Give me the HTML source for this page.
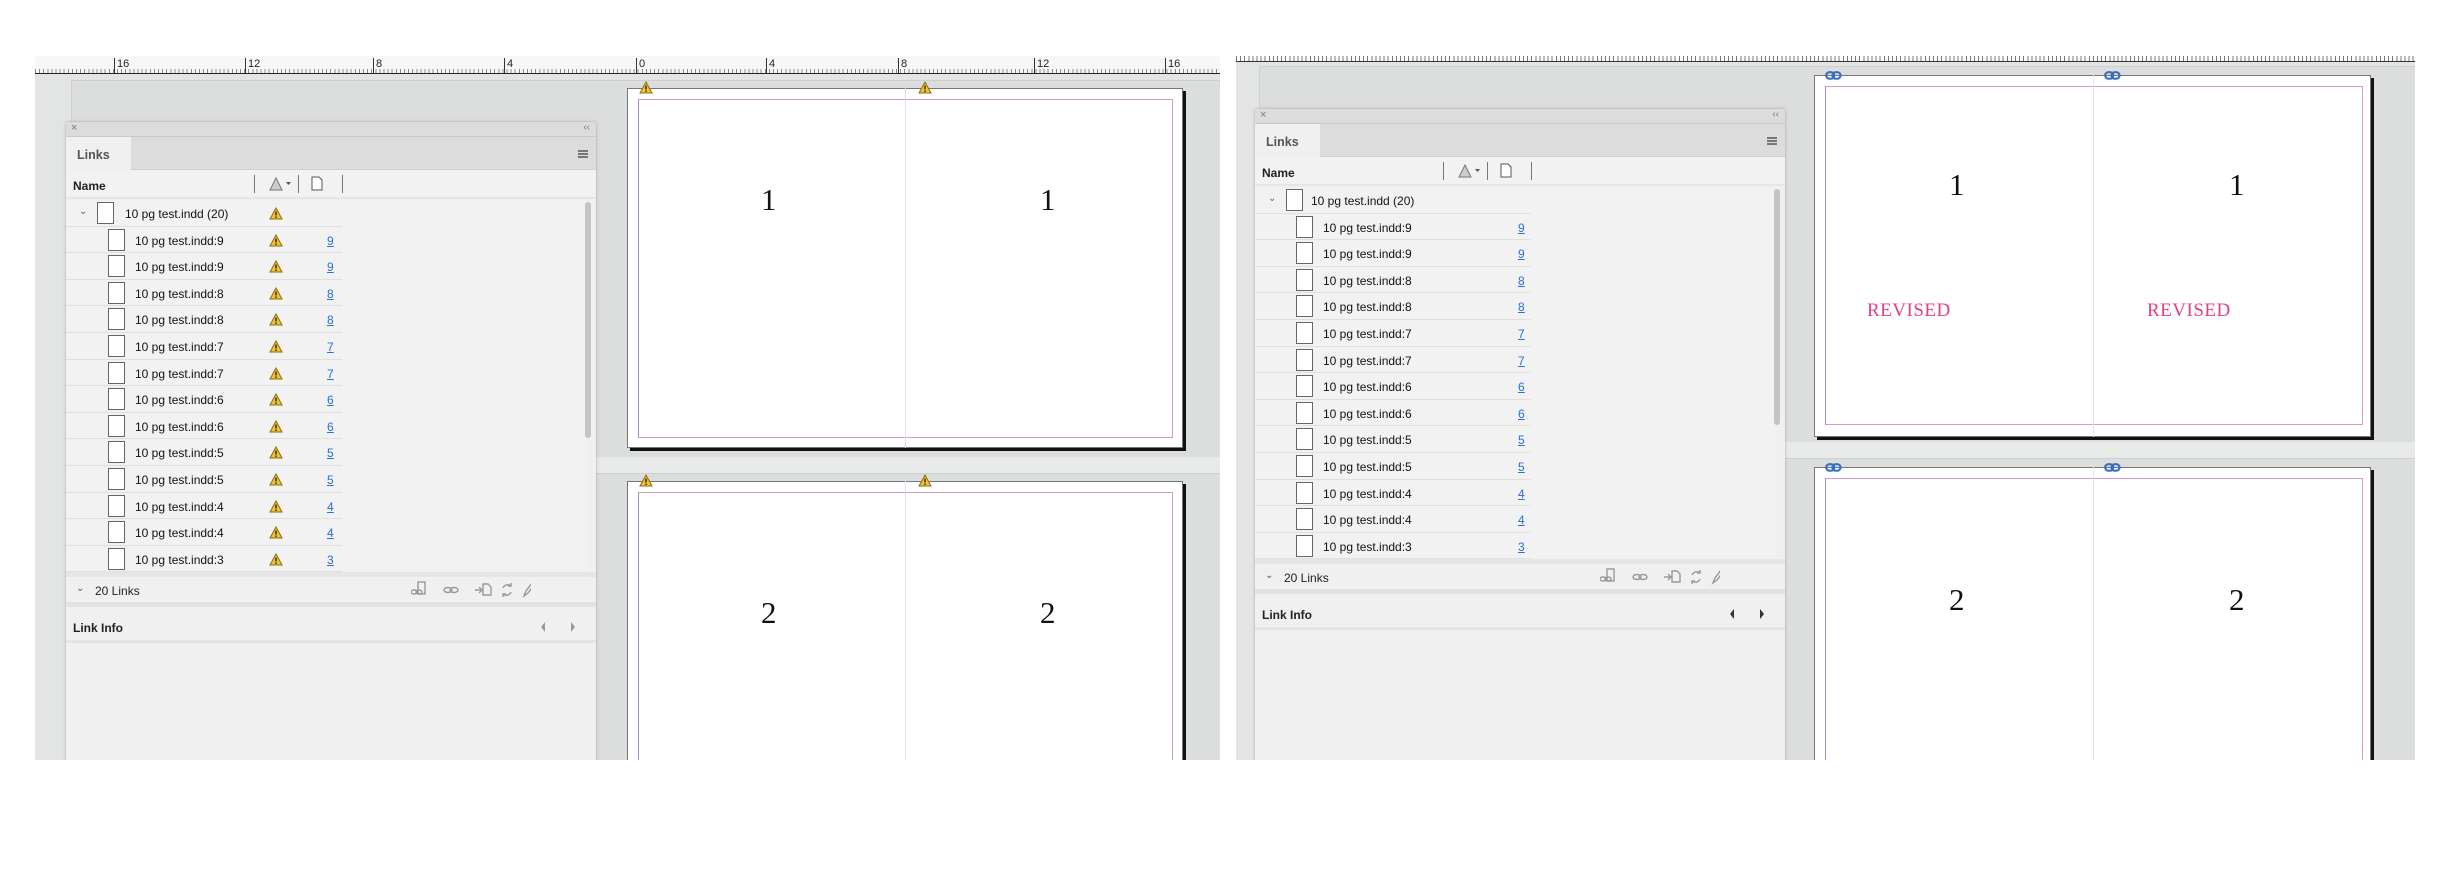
<!DOCTYPE html>
<html><head><meta charset="utf-8">
<style>
*{margin:0;padding:0;box-sizing:border-box}
body{width:2450px;height:878px;background:#fff;position:relative;overflow:hidden;font-family:"Liberation Sans",sans-serif;font-size:12px;color:#222}
.a{position:absolute}
.scr{position:absolute;background:#e3e4e4;overflow:hidden}
.ruler{position:absolute;background:#f7f7f7;border-bottom:1px solid #222;
background-image:repeating-linear-gradient(90deg,#888 0 1px,transparent 1px 4.1px);background-size:100% 4px;background-repeat:repeat-x;background-position:0 100%}
.rn{position:absolute;top:2px;font-size:11px;color:#222;border-left:1px solid #333;padding-left:2px;height:15px}
.pb{position:absolute;background:#dcdddd;border-top:1px solid #cfcfcf;border-left:1px solid #cfcfcf}
.page{position:absolute;background:#fff;border:1px solid #777;box-shadow:3px 3px 0 #111}
.marg{position:absolute;border:1px solid #d79ac4;border-left-color:#a58ad0}
.fold{position:absolute;width:1px;background:#dde3ea}
.num{position:absolute;font-family:"Liberation Serif",serif;font-size:31px;color:#111}
.rev{position:absolute;font-family:"Liberation Serif",serif;font-size:19px;color:#e0408c;letter-spacing:.5px}
.panel{position:absolute;background:#f0f0f0;box-shadow:0 0 3px rgba(0,0,0,.25);overflow:hidden}
.hdr{position:absolute;left:0;right:0;top:0;height:15px;background:#dcdcdc;border-bottom:1px solid #cacaca}
.tabrow{position:absolute;left:0;right:0;top:15px;height:33px;background:#dcdcdc;border-bottom:1px solid #cfcfcf}
.tab{position:absolute;left:0;top:0;width:65px;height:34px;background:#f0f0f0;font-weight:bold;color:#555;font-size:12.5px;padding:11px 0 0 11px}
.ch{position:absolute;left:0;right:0;top:48px;height:29px;border-bottom:2px solid #e6e6e6;background:#f2f2f2}
.row{position:absolute;left:0;width:276px;height:26.6px;border-bottom:1px solid #e0e0e0;background:#f2f2f2}
.doc{position:absolute;width:17px;height:22px;background:#fff;border:1px solid #666;top:2px}
.t{position:absolute;top:7px;font-size:12px;white-space:nowrap;color:#111}
.pg{position:absolute;top:7px;color:#2a6fd6;text-decoration:underline;font-size:12px}
.sb{position:absolute;width:6px;border-radius:3px;background:#c4c4c4}
.bar{position:absolute;left:0;right:0;height:35px;border-top:5px solid #e6e6e6;border-bottom:5px solid #e2e2e2}
.li{position:absolute;left:0;right:0;height:31px;border-bottom:3px solid #e4e4e4}
</style></head><body>

<!-- LEFT SCREEN -->
<div class="scr" style="left:35px;top:56px;width:1185px;height:704px">
  <div class="ruler" style="left:0;top:0;width:1185px;height:18px"></div>
  <div class="rn" style="left:79px">16</div><div class="rn" style="left:210px">12</div><div class="rn" style="left:338px">8</div><div class="rn" style="left:469px">4</div><div class="rn" style="left:601px">0</div><div class="rn" style="left:731px">4</div><div class="rn" style="left:863px">8</div><div class="rn" style="left:999px">12</div><div class="rn" style="left:1130px">16</div>
  <div class="pb" style="left:36px;top:24px;width:1160px;height:377px"></div>
  <div class="a" style="left:560px;top:401px;width:640px;height:16px;background:#e8e9e9"></div>
  <div class="pb" style="left:560px;top:417px;width:640px;height:300px"></div>
  <div class="page" style="left:592px;top:32px;width:556px;height:360px"></div>
  <div class="marg" style="left:603px;top:43px;width:535px;height:339px"></div>
  <div class="fold" style="left:870px;top:32px;height:360px"></div>
  <div class="num" style="left:726px;top:126px">1</div><div class="num" style="left:1005px;top:126px">1</div>
  <div class="page" style="left:592px;top:425px;width:556px;height:300px"></div>
  <div class="marg" style="left:603px;top:436px;width:535px;height:300px"></div>
  <div class="fold" style="left:870px;top:425px;height:300px"></div>
  <div class="num" style="left:726px;top:539px">2</div><div class="num" style="left:1005px;top:539px">2</div>
  <svg class="a" style="left:604px;top:25px" width="14" height="13"><path d="M7 1L13 12H1Z" fill="#f2c232" stroke="#8a6d10"/><rect x="6.3" y="4.5" width="1.4" height="4" fill="#222"/><rect x="6.3" y="9.5" width="1.4" height="1.4" fill="#222"/></svg>
  <svg class="a" style="left:883px;top:25px" width="14" height="13"><path d="M7 1L13 12H1Z" fill="#f2c232" stroke="#8a6d10"/><rect x="6.3" y="4.5" width="1.4" height="4" fill="#222"/><rect x="6.3" y="9.5" width="1.4" height="1.4" fill="#222"/></svg>
  <svg class="a" style="left:604px;top:418px" width="14" height="13"><path d="M7 1L13 12H1Z" fill="#f2c232" stroke="#8a6d10"/><rect x="6.3" y="4.5" width="1.4" height="4" fill="#222"/><rect x="6.3" y="9.5" width="1.4" height="1.4" fill="#222"/></svg>
  <svg class="a" style="left:883px;top:418px" width="14" height="13"><path d="M7 1L13 12H1Z" fill="#f2c232" stroke="#8a6d10"/><rect x="6.3" y="4.5" width="1.4" height="4" fill="#222"/><rect x="6.3" y="9.5" width="1.4" height="1.4" fill="#222"/></svg>
</div>

<!-- LEFT PANEL -->
<div class="panel" style="left:66px;top:122px;width:530px;height:640px">
  <div class="hdr"><span class="a" style="left:5px;top:0;font-size:11px;color:#777">×</span><span class="a" style="right:6px;top:0;font-size:10px;color:#777">‹‹</span></div>
  <div class="tabrow"><div class="tab">Links</div><div class="a" style="right:8px;top:13px;width:10px;height:8px;border-top:2px solid #777;border-bottom:2px solid #777"><div style="margin-top:1px;border-top:2px solid #777"></div></div></div>
  <div class="ch"><b class="a" style="left:7px;top:9px">Name</b>
    <div class="a" style="left:188px;top:5px;width:1px;height:18px;background:#777"></div>
    <svg class="a" style="left:203px;top:7px" width="24" height="14"><path d="M7 1L13 13H1Z" fill="#ccc" stroke="#777"/><path d="M17 5h5l-2.5 3z" fill="#555"/></svg>
    <div class="a" style="left:232px;top:5px;width:1px;height:18px;background:#777"></div>
    <svg class="a" style="left:245px;top:6px" width="12" height="15"><path d="M1 1h7l3 3v10H1z" fill="#fff" stroke="#555"/></svg>
    <div class="a" style="left:276px;top:5px;width:1px;height:18px;background:#777"></div>
  </div>
  <div class="a" style="left:0;top:78px;width:520px;height:372px;background:#f2f2f2"></div>
  <div class="sb" style="left:519px;top:80px;height:236px"></div>

  <div class="row" style="top:78px"><span class="a" style="left:13px;top:6px;font-size:10px;color:#666">⌄</span><div class="doc" style="left:31px"></div><span class="t" style="left:59px">10 pg test.indd (20)</span><svg class="a" style="left:203px;top:7px" width="14" height="13"><path d="M7 1L13 12H1Z" fill="#f2c232" stroke="#8a6d10"/><rect x="6.3" y="4.5" width="1.4" height="4" fill="#222"/><rect x="6.3" y="9.5" width="1.4" height="1.4" fill="#222"/></svg></div>
  <div class="row" style="top:104.6px"><div class="doc" style="left:42px"></div><span class="t" style="left:69px">10 pg test.indd:9</span><svg class="a" style="left:203px;top:7px" width="14" height="13"><path d="M7 1L13 12H1Z" fill="#f2c232" stroke="#8a6d10"/><rect x="6.3" y="4.5" width="1.4" height="4" fill="#222"/><rect x="6.3" y="9.5" width="1.4" height="1.4" fill="#222"/></svg><span class="pg" style="left:261px">9</span></div>
  <div class="row" style="top:131.2px"><div class="doc" style="left:42px"></div><span class="t" style="left:69px">10 pg test.indd:9</span><svg class="a" style="left:203px;top:7px" width="14" height="13"><path d="M7 1L13 12H1Z" fill="#f2c232" stroke="#8a6d10"/><rect x="6.3" y="4.5" width="1.4" height="4" fill="#222"/><rect x="6.3" y="9.5" width="1.4" height="1.4" fill="#222"/></svg><span class="pg" style="left:261px">9</span></div>
  <div class="row" style="top:157.8px"><div class="doc" style="left:42px"></div><span class="t" style="left:69px">10 pg test.indd:8</span><svg class="a" style="left:203px;top:7px" width="14" height="13"><path d="M7 1L13 12H1Z" fill="#f2c232" stroke="#8a6d10"/><rect x="6.3" y="4.5" width="1.4" height="4" fill="#222"/><rect x="6.3" y="9.5" width="1.4" height="1.4" fill="#222"/></svg><span class="pg" style="left:261px">8</span></div>
  <div class="row" style="top:184.4px"><div class="doc" style="left:42px"></div><span class="t" style="left:69px">10 pg test.indd:8</span><svg class="a" style="left:203px;top:7px" width="14" height="13"><path d="M7 1L13 12H1Z" fill="#f2c232" stroke="#8a6d10"/><rect x="6.3" y="4.5" width="1.4" height="4" fill="#222"/><rect x="6.3" y="9.5" width="1.4" height="1.4" fill="#222"/></svg><span class="pg" style="left:261px">8</span></div>
  <div class="row" style="top:211px"><div class="doc" style="left:42px"></div><span class="t" style="left:69px">10 pg test.indd:7</span><svg class="a" style="left:203px;top:7px" width="14" height="13"><path d="M7 1L13 12H1Z" fill="#f2c232" stroke="#8a6d10"/><rect x="6.3" y="4.5" width="1.4" height="4" fill="#222"/><rect x="6.3" y="9.5" width="1.4" height="1.4" fill="#222"/></svg><span class="pg" style="left:261px">7</span></div>
  <div class="row" style="top:237.6px"><div class="doc" style="left:42px"></div><span class="t" style="left:69px">10 pg test.indd:7</span><svg class="a" style="left:203px;top:7px" width="14" height="13"><path d="M7 1L13 12H1Z" fill="#f2c232" stroke="#8a6d10"/><rect x="6.3" y="4.5" width="1.4" height="4" fill="#222"/><rect x="6.3" y="9.5" width="1.4" height="1.4" fill="#222"/></svg><span class="pg" style="left:261px">7</span></div>
  <div class="row" style="top:264.2px"><div class="doc" style="left:42px"></div><span class="t" style="left:69px">10 pg test.indd:6</span><svg class="a" style="left:203px;top:7px" width="14" height="13"><path d="M7 1L13 12H1Z" fill="#f2c232" stroke="#8a6d10"/><rect x="6.3" y="4.5" width="1.4" height="4" fill="#222"/><rect x="6.3" y="9.5" width="1.4" height="1.4" fill="#222"/></svg><span class="pg" style="left:261px">6</span></div>
  <div class="row" style="top:290.8px"><div class="doc" style="left:42px"></div><span class="t" style="left:69px">10 pg test.indd:6</span><svg class="a" style="left:203px;top:7px" width="14" height="13"><path d="M7 1L13 12H1Z" fill="#f2c232" stroke="#8a6d10"/><rect x="6.3" y="4.5" width="1.4" height="4" fill="#222"/><rect x="6.3" y="9.5" width="1.4" height="1.4" fill="#222"/></svg><span class="pg" style="left:261px">6</span></div>
  <div class="row" style="top:317.4px"><div class="doc" style="left:42px"></div><span class="t" style="left:69px">10 pg test.indd:5</span><svg class="a" style="left:203px;top:7px" width="14" height="13"><path d="M7 1L13 12H1Z" fill="#f2c232" stroke="#8a6d10"/><rect x="6.3" y="4.5" width="1.4" height="4" fill="#222"/><rect x="6.3" y="9.5" width="1.4" height="1.4" fill="#222"/></svg><span class="pg" style="left:261px">5</span></div>
  <div class="row" style="top:344px"><div class="doc" style="left:42px"></div><span class="t" style="left:69px">10 pg test.indd:5</span><svg class="a" style="left:203px;top:7px" width="14" height="13"><path d="M7 1L13 12H1Z" fill="#f2c232" stroke="#8a6d10"/><rect x="6.3" y="4.5" width="1.4" height="4" fill="#222"/><rect x="6.3" y="9.5" width="1.4" height="1.4" fill="#222"/></svg><span class="pg" style="left:261px">5</span></div>
  <div class="row" style="top:370.6px"><div class="doc" style="left:42px"></div><span class="t" style="left:69px">10 pg test.indd:4</span><svg class="a" style="left:203px;top:7px" width="14" height="13"><path d="M7 1L13 12H1Z" fill="#f2c232" stroke="#8a6d10"/><rect x="6.3" y="4.5" width="1.4" height="4" fill="#222"/><rect x="6.3" y="9.5" width="1.4" height="1.4" fill="#222"/></svg><span class="pg" style="left:261px">4</span></div>
  <div class="row" style="top:397.2px"><div class="doc" style="left:42px"></div><span class="t" style="left:69px">10 pg test.indd:4</span><svg class="a" style="left:203px;top:7px" width="14" height="13"><path d="M7 1L13 12H1Z" fill="#f2c232" stroke="#8a6d10"/><rect x="6.3" y="4.5" width="1.4" height="4" fill="#222"/><rect x="6.3" y="9.5" width="1.4" height="1.4" fill="#222"/></svg><span class="pg" style="left:261px">4</span></div>
  <div class="row" style="top:423.8px"><div class="doc" style="left:42px"></div><span class="t" style="left:69px">10 pg test.indd:3</span><svg class="a" style="left:203px;top:7px" width="14" height="13"><path d="M7 1L13 12H1Z" fill="#f2c232" stroke="#8a6d10"/><rect x="6.3" y="4.5" width="1.4" height="4" fill="#222"/><rect x="6.3" y="9.5" width="1.4" height="1.4" fill="#222"/></svg><span class="pg" style="left:261px">3</span></div>

  <div class="bar" style="top:450px"><span class="a" style="left:10px;top:6px;font-size:10px;color:#555">⌄</span><span class="a" style="left:29px;top:7px">20 Links</span>
    <svg class="a" style="left:345px;top:3px" width="120" height="20" fill="none" stroke="#999" stroke-width="1.4"><rect x="7" y="2" width="7" height="12"/><ellipse cx="3" cy="12" rx="3" ry="2"/><ellipse cx="8" cy="12" rx="3" ry="2"/><ellipse cx="37" cy="10" rx="4" ry="2.5"/><ellipse cx="43" cy="10" rx="4" ry="2.5"/><path d="M64 10h7M68 7l3 3-3 3M72 4h5l3 3v8h-8z"/><path d="M100 6a5 5 0 0 0-8 2M92 14a5 5 0 0 0 8-2M100 3v3h-3M92 17v-3h3"/><path d="M113 16l2-5 6-8 2 2-6 8z"/></svg></div>
  <div class="li" style="top:490px"><b class="a" style="left:7px;top:9px">Link Info</b><svg class="a" style="left:473px;top:9px" width="40" height="12"><path d="M6 1L2 6l4 5z" fill="#999"/><path d="M32 1l4 5-4 5z" fill="#999"/></svg></div>
</div>

<!-- RIGHT SCREEN -->
<div class="a" style="left:1236px;top:56px;width:1179px;height:6px;border-bottom:1px solid #333;background-image:repeating-linear-gradient(90deg,#777 0 1px,transparent 1px 4.1px)"></div>
<div class="scr" style="left:1236px;top:62px;width:1179px;height:698px">
  <div class="pb" style="left:23px;top:4px;width:1160px;height:376px"></div>
  <div class="a" style="left:540px;top:380px;width:640px;height:16px;background:#e8e9e9"></div>
  <div class="pb" style="left:540px;top:396px;width:640px;height:310px"></div>
  <div class="page" style="left:578px;top:13px;width:557px;height:362px"></div>
  <div class="marg" style="left:589px;top:24px;width:538px;height:339px"></div>
  <div class="fold" style="left:857px;top:13px;height:362px"></div>
  <div class="num" style="left:713px;top:105px">1</div><div class="num" style="left:993px;top:105px">1</div>
  <div class="rev" style="left:631px;top:238px">REVISED</div><div class="rev" style="left:911px;top:238px">REVISED</div>
  <div class="page" style="left:578px;top:405px;width:557px;height:320px"></div>
  <div class="marg" style="left:589px;top:416px;width:538px;height:320px"></div>
  <div class="fold" style="left:857px;top:405px;height:320px"></div>
  <div class="num" style="left:713px;top:520px">2</div><div class="num" style="left:993px;top:520px">2</div>
  <svg class="a" style="left:589px;top:9px" width="17" height="9" fill="none" stroke="#3a6fbf" stroke-width="2.2"><rect x="1.2" y="1.2" width="8" height="6.5" rx="3.2"/><rect x="7.5" y="1.2" width="8" height="6.5" rx="3.2"/></svg>
  <svg class="a" style="left:868px;top:9px" width="17" height="9" fill="none" stroke="#3a6fbf" stroke-width="2.2"><rect x="1.2" y="1.2" width="8" height="6.5" rx="3.2"/><rect x="7.5" y="1.2" width="8" height="6.5" rx="3.2"/></svg>
  <svg class="a" style="left:589px;top:401px" width="17" height="9" fill="none" stroke="#3a6fbf" stroke-width="2.2"><rect x="1.2" y="1.2" width="8" height="6.5" rx="3.2"/><rect x="7.5" y="1.2" width="8" height="6.5" rx="3.2"/></svg>
  <svg class="a" style="left:868px;top:401px" width="17" height="9" fill="none" stroke="#3a6fbf" stroke-width="2.2"><rect x="1.2" y="1.2" width="8" height="6.5" rx="3.2"/><rect x="7.5" y="1.2" width="8" height="6.5" rx="3.2"/></svg>
</div>

<!-- RIGHT PANEL -->
<div class="panel" style="left:1255px;top:109px;width:530px;height:651px">
  <div class="hdr"><span class="a" style="left:5px;top:0;font-size:11px;color:#777">×</span><span class="a" style="right:6px;top:0;font-size:10px;color:#777">‹‹</span></div>
  <div class="tabrow"><div class="tab">Links</div><div class="a" style="right:8px;top:13px;width:10px;height:8px;border-top:2px solid #777;border-bottom:2px solid #777"><div style="margin-top:1px;border-top:2px solid #777"></div></div></div>
  <div class="ch"><b class="a" style="left:7px;top:9px">Name</b>
    <div class="a" style="left:188px;top:5px;width:1px;height:18px;background:#777"></div>
    <svg class="a" style="left:203px;top:7px" width="24" height="14"><path d="M7 1L13 13H1Z" fill="#ccc" stroke="#777"/><path d="M17 5h5l-2.5 3z" fill="#555"/></svg>
    <div class="a" style="left:232px;top:5px;width:1px;height:18px;background:#777"></div>
    <svg class="a" style="left:245px;top:6px" width="12" height="15"><path d="M1 1h7l3 3v10H1z" fill="#fff" stroke="#555"/></svg>
    <div class="a" style="left:276px;top:5px;width:1px;height:18px;background:#777"></div>
  </div>
  <div class="a" style="left:0;top:78px;width:520px;height:372px;background:#f2f2f2"></div>
  <div class="sb" style="left:519px;top:80px;height:236px"></div>

  <div class="row" style="top:78px"><span class="a" style="left:13px;top:6px;font-size:10px;color:#666">⌄</span><div class="doc" style="left:31px"></div><span class="t" style="left:56px">10 pg test.indd (20)</span></div>
  <div class="row" style="top:104.6px"><div class="doc" style="left:41px"></div><span class="t" style="left:68px">10 pg test.indd:9</span><span class="pg" style="left:263px">9</span></div>
  <div class="row" style="top:131.2px"><div class="doc" style="left:41px"></div><span class="t" style="left:68px">10 pg test.indd:9</span><span class="pg" style="left:263px">9</span></div>
  <div class="row" style="top:157.8px"><div class="doc" style="left:41px"></div><span class="t" style="left:68px">10 pg test.indd:8</span><span class="pg" style="left:263px">8</span></div>
  <div class="row" style="top:184.4px"><div class="doc" style="left:41px"></div><span class="t" style="left:68px">10 pg test.indd:8</span><span class="pg" style="left:263px">8</span></div>
  <div class="row" style="top:211px"><div class="doc" style="left:41px"></div><span class="t" style="left:68px">10 pg test.indd:7</span><span class="pg" style="left:263px">7</span></div>
  <div class="row" style="top:237.6px"><div class="doc" style="left:41px"></div><span class="t" style="left:68px">10 pg test.indd:7</span><span class="pg" style="left:263px">7</span></div>
  <div class="row" style="top:264.2px"><div class="doc" style="left:41px"></div><span class="t" style="left:68px">10 pg test.indd:6</span><span class="pg" style="left:263px">6</span></div>
  <div class="row" style="top:290.8px"><div class="doc" style="left:41px"></div><span class="t" style="left:68px">10 pg test.indd:6</span><span class="pg" style="left:263px">6</span></div>
  <div class="row" style="top:317.4px"><div class="doc" style="left:41px"></div><span class="t" style="left:68px">10 pg test.indd:5</span><span class="pg" style="left:263px">5</span></div>
  <div class="row" style="top:344px"><div class="doc" style="left:41px"></div><span class="t" style="left:68px">10 pg test.indd:5</span><span class="pg" style="left:263px">5</span></div>
  <div class="row" style="top:370.6px"><div class="doc" style="left:41px"></div><span class="t" style="left:68px">10 pg test.indd:4</span><span class="pg" style="left:263px">4</span></div>
  <div class="row" style="top:397.2px"><div class="doc" style="left:41px"></div><span class="t" style="left:68px">10 pg test.indd:4</span><span class="pg" style="left:263px">4</span></div>
  <div class="row" style="top:423.8px"><div class="doc" style="left:41px"></div><span class="t" style="left:68px">10 pg test.indd:3</span><span class="pg" style="left:263px">3</span></div>

  <div class="bar" style="top:450px"><span class="a" style="left:10px;top:6px;font-size:10px;color:#555">⌄</span><span class="a" style="left:29px;top:7px">20 Links</span>
    <svg class="a" style="left:345px;top:3px" width="120" height="20" fill="none" stroke="#999" stroke-width="1.4"><rect x="7" y="2" width="7" height="12"/><ellipse cx="3" cy="12" rx="3" ry="2"/><ellipse cx="8" cy="12" rx="3" ry="2"/><ellipse cx="37" cy="10" rx="4" ry="2.5"/><ellipse cx="43" cy="10" rx="4" ry="2.5"/><path d="M64 10h7M68 7l3 3-3 3M72 4h5l3 3v8h-8z"/><path d="M100 6a5 5 0 0 0-8 2M92 14a5 5 0 0 0 8-2M100 3v3h-3M92 17v-3h3"/><path d="M113 16l2-5 6-8 2 2-6 8z"/></svg></div>
  <div class="li" style="top:490px"><b class="a" style="left:7px;top:9px">Link Info</b><svg class="a" style="left:473px;top:9px" width="40" height="12"><path d="M6 1L2 6l4 5z" fill="#333"/><path d="M32 1l4 5-4 5z" fill="#333"/></svg></div>
</div>
<div class="a" style="left:0;top:760px;width:2450px;height:118px;background:#fff"></div>
</body></html>
